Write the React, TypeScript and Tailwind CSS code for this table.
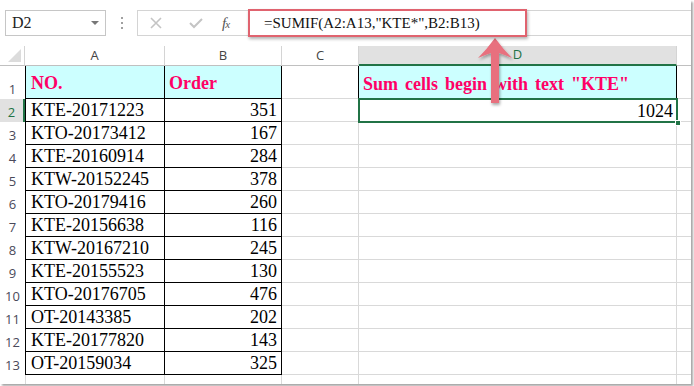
const rows: [string, string][] = [
  ["KTE-20171223", "351"],
  ["KTO-20173412", "167"],
  ["KTE-20160914", "284"],
  ["KTW-20152245", "378"],
  ["KTO-20179416", "260"],
  ["KTE-20156638", "116"],
  ["KTW-20167210", "245"],
  ["KTE-20155523", "130"],
  ["KTO-20176705", "476"],
  ["OT-20143385", "202"],
  ["KTE-20177820", "143"],
  ["OT-20159034", "325"],
];

const sans = "font-['Open_Sans','Liberation_Sans',sans-serif]";

function RowHead({ n, selected }: { n: number | string; selected?: boolean }) {
  return (
    <div
      className={`box-border flex items-end justify-center pb-[2px] text-[13px] leading-[16px] ${sans} ${
        selected ? "bg-[#e1e1e1] border-r-2 border-[#217346] text-[#217346]" : "text-[#4a4a5a]"
      }`}
    >
      {n}
    </div>
  );
}

function ColHead({ label, selected, last }: { label: string; selected?: boolean; last?: boolean }) {
  return (
    <div
      className={`box-border flex items-center justify-center text-[13px] ${sans} ${
        last ? "" : "border-r border-[#d4d4d4]"
      } ${
        selected
          ? "bg-[#e1e1e1] border-b-2 border-b-[#217346] text-[#217346]"
          : "bg-white border-b border-b-[#c0c0c0] text-[#444]"
      }`}
    >
      {label}
    </div>
  );
}

function Grid({ last, dark }: { last?: boolean; dark?: boolean }) {
  return (
    <div
      className={`box-border border-b border-[#d9d9d9] ${last ? "" : "border-r"} ${dark ? "border-r-black" : ""}`}
    />
  );
}

export default function App() {
  return (
    <div className="w-[694px] h-[386px] bg-white overflow-hidden">
      <div className="relative w-[691px] h-[384px] bg-white shadow-[2px_2px_2px_rgba(0,0,0,0.35)] overflow-hidden font-['Liberation_Serif',serif]">
        {/* formula bar */}
        <div className="flex items-start h-[46px] pt-[10px] pl-[5px]">
          <div className="box-border flex items-center justify-between w-[101px] h-[26px] border border-[#c6c6c6] pl-[6px] pr-[6px]">
            <span className="text-[16px] text-[#222]">D2</span>
            <span className="w-0 h-0 border-l-[4px] border-r-[4px] border-t-[4px] border-l-transparent border-r-transparent border-t-[#777]" />
          </div>
          <div className="flex flex-col items-center justify-center gap-[3px] w-[31px] h-[26px]">
            <span className="w-[2px] h-[2px] bg-[#a0a0a0]" />
            <span className="w-[2px] h-[2px] bg-[#a0a0a0]" />
            <span className="w-[2px] h-[2px] bg-[#a0a0a0]" />
          </div>
          <div className="box-border flex items-center w-[111px] h-[26px] border border-r-0 border-[#d4d4d4]">
            <svg width="12" height="12" viewBox="0 0 12 12" className="ml-[12px]">
              <path d="M1 1 L11 11 M11 1 L1 11" stroke="#c4c4c4" strokeWidth="1.6" />
            </svg>
            <svg width="14" height="12" viewBox="0 0 14 12" className="ml-[27px]">
              <path d="M1 6 L5 10 L13 2" stroke="#c4c4c4" strokeWidth="2" fill="none" />
            </svg>
            <span className="ml-[19px] italic text-[15px] text-[#555] tracking-[-1px]">
              f<span className="text-[11px]">x</span>
            </span>
          </div>
          <div className="box-border -mt-[1px] w-[279px] h-[28px] border-2 border-[#e0636f] shadow-[1px_2px_3px_rgba(0,0,0,0.3)] pl-[14px] text-[15px] leading-[24px] text-[#111] bg-white z-10">
            =SUMIF(A2:A13,"KTE*",B2:B13)
          </div>
          <div className="box-border flex-1 h-[26px] border-y border-[#d4d4d4] bg-white" />
        </div>

        {/* sheet */}
        <div className="grid grid-cols-[25px_140px_117px_77px_318px_14px] grid-rows-[20px_33px_repeat(12,23px)_9px]">
          {/* header row */}
          <div className="box-border relative border-r border-b border-[#c0c0c0] border-r-[#d4d4d4]">
            <div className="absolute right-[3px] bottom-[3px] w-0 h-0 border-b-[13px] border-l-[13px] border-b-[#dcdcdc] border-l-transparent" />
          </div>
          <ColHead label="A" />
          <ColHead label="B" />
          <ColHead label="C" />
          <ColHead label="D" selected />
          <ColHead label="" last />

          {/* row 1 */}
          <RowHead n={1} />
          <div className="box-border flex items-end pb-[5px] pl-[5px] bg-[#ccffff] border-l border-r border-b border-black font-bold text-[18px] leading-[20px] text-[#ff0066]">
            NO.
          </div>
          <div className="box-border flex items-end pb-[5px] pl-[4px] bg-[#ccffff] border-r border-b border-black font-bold text-[18px] leading-[20px] text-[#ff0066]">
            Order
          </div>
          <Grid dark />
          <div className="box-border flex items-end pb-[5px] pl-[4px] bg-[#ccffff] border-r border-black font-bold text-[18px] leading-[20px] text-[#ff0066] whitespace-nowrap [word-spacing:2.5px]">
            Sum cells begin with text "KTE"
          </div>
          <Grid last />

          {/* data rows */}
          {rows.map(([no, order], i) => (
            <div key={no} className="contents">
              <RowHead n={i + 2} selected={i === 0} />
              <div className="box-border flex items-end pb-[1px] pl-[5px] border-l border-r border-b border-black text-[18px] leading-[20px] text-black">
                {no}
              </div>
              <div className="box-border flex items-end justify-end pb-[1px] pr-[4px] border-r border-b border-black text-[18px] leading-[20px] text-black">
                {order}
              </div>
              <Grid />
              {i === 0 ? (
                <div className="relative box-border flex items-end justify-end pb-[1px] pr-[4px] text-[18px] leading-[20px] text-black">
                  <div className="absolute -left-[1px] -top-[1px] -right-[1px] -bottom-[1px] border-2 border-[#217346]" />
                  <div className="absolute -right-[4px] -bottom-[4px] w-[6px] h-[6px] bg-[#217346] border border-white" />
                  1024
                </div>
              ) : (
                <Grid />
              )}
              <Grid last />
            </div>
          ))}

          {/* trailing row */}
          <RowHead n="" />
          <div className="box-border border-r border-l border-[#d9d9d9]" />
          <div className="box-border border-r border-[#d9d9d9]" />
          <div className="box-border border-r border-[#d9d9d9]" />
          <div className="box-border border-r border-[#d9d9d9]" />
          <div />
        </div>

        {/* callout arrow */}
        <svg className="absolute left-0 top-0 pointer-events-none" width="691" height="384" viewBox="0 0 691 384">
          <defs>
            <filter id="sh" x="-50%" y="-20%" width="200%" height="140%">
              <feDropShadow dx="1" dy="2" stdDeviation="1.5" floodColor="#000" floodOpacity="0.35" />
            </filter>
          </defs>
          <path
            d="M495 38 Q503 49 512 58 Q505 55 499 53 L499 103 L491 103 L491 53 Q485 55 478 58 Q487 49 495 38 Z"
            fill="#e8707e"
            filter="url(#sh)"
          />
        </svg>
      </div>
    </div>
  );
}
